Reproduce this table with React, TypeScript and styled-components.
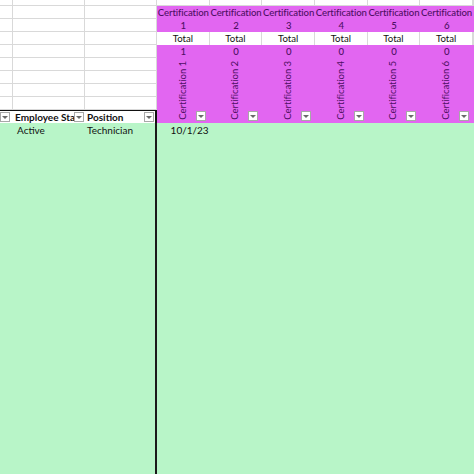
import React from "react";
import styled, { createGlobalStyle, css } from "styled-components";

const MAGENTA = "#E266F1";
const PURPLE = "#4E0F63";
const GREEN = "#B8F5C8";
const GRID = "#D9D9D9";

const Global = createGlobalStyle`
  html, body { margin: 0; padding: 0; background: #fff; }
  body { font-family: Lato, "Liberation Sans", sans-serif; }
`;

const Sheet = styled.div`
  width: 474px;
  height: 474px;
  overflow: hidden;
  display: grid;
  grid-template-columns: 13px 72px 72px repeat(6, 52.67px) 1fr;
  grid-template-rows: 6px repeat(8, 13px) 13px 13px 1fr;
  font-size: 10px;
`;

type Area = { c: string; r: string };

const Cell = styled.div<{ $c: string; $r: string }>`
  grid-column: ${(p) => p.$c};
  grid-row: ${(p) => p.$r};
  box-sizing: border-box;
  position: relative;
  min-width: 0;
  overflow: hidden;
`;

const GridCell = styled(Cell)`
  background: #fff;
  border-right: 1px solid ${GRID};
  border-bottom: 1px solid ${GRID};
`;

const MagentaCell = styled(Cell)`
  background: ${MAGENTA};
  color: ${PURPLE};
  display: flex;
  align-items: center;
  justify-content: center;
  font-size: 9.6px;
  letter-spacing: -0.1px;
  line-height: 13px;
  white-space: nowrap;
  font-weight: 500;
`;

const TotalCell = styled(Cell)`
  background: #fff;
  color: #111;
  border-right: 1px solid ${GRID};
  display: flex;
  align-items: center;
  justify-content: center;
  font-size: 9.6px;
`;

const RotatedHeader = styled(Cell)`
  background: ${MAGENTA};
  display: flex;
  align-items: flex-end;
  justify-content: center;
  padding-bottom: 3px;
  padding-right: 1px;
`;

const VerticalText = styled.span`
  writing-mode: vertical-rl;
  transform: rotate(180deg);
  color: ${PURPLE};
  font-size: 9.6px;
  letter-spacing: -0.1px;
  line-height: 12px;
  white-space: nowrap;
`;

const HeaderCell = styled(Cell)<{ $last?: boolean }>`
  background: #fff;
  border-top: 1px solid #111;
  display: flex;
  align-items: center;
  padding-left: 2px;
  font-weight: 700;
  color: #111;
  font-size: 10px;
  white-space: nowrap;
  ${(p) =>
    p.$last &&
    css`
      border-right: 2px solid #111;
    `}
`;

const HeaderText = styled.span`
  flex: 1;
  min-width: 0;
  overflow: hidden;
`;

const GreenCell = styled(Cell)<{ $edge?: boolean; $align?: string; $pad?: number }>`
  background: ${GREEN};
  color: #111;
  font-size: 10px;
  display: flex;
  align-items: center;
  justify-content: ${(p) => p.$align || "flex-start"};
  padding-left: ${(p) => p.$pad ?? 0}px;
  white-space: nowrap;
  ${(p) =>
    p.$edge &&
    css`
      border-right: 2px solid #1a1a1a;
    `}
`;

const DateCell = styled(GreenCell)`
  padding-right: 1px;
  font-size: 10px;
`;

const Drop = styled.span<{ $abs?: boolean }>`
  flex: none;
  width: 10px;
  height: 10px;
  box-sizing: border-box;
  background: #fff;
  border: 1px solid #a8a8a8;
  display: flex;
  align-items: center;
  justify-content: center;
  margin-right: 1px;
  ${(p) =>
    p.$abs &&
    css`
      position: absolute;
      right: 3px;
      bottom: 2px;
    `}
  &::after {
    content: "";
    width: 0;
    height: 0;
    border-left: 3px solid transparent;
    border-right: 3px solid transparent;
    border-top: 3px solid #6a6a6a;
  }
`;

const certs = [
  { n: 1, total: 1 },
  { n: 2, total: 0 },
  { n: 3, total: 0 },
  { n: 4, total: 0 },
  { n: 5, total: 0 },
  { n: 6, total: 0 },
];

export default function App() {
  const leftGrid: Area[] = [];
  for (let r = 1; r <= 9; r++) {
    for (let c = 1; c <= 3; c++) leftGrid.push({ c: `${c}`, r: `${r}` });
  }
  const topRight: Area[] = [];
  for (let c = 4; c <= 10; c++) topRight.push({ c: `${c}`, r: "1" });

  return (
    <>
      <Global />
      <Sheet>
        {leftGrid.map((a) => (
          <GridCell key={`l${a.c}-${a.r}`} $c={a.c} $r={a.r} />
        ))}
        {topRight.map((a) => (
          <GridCell key={`t${a.c}`} $c={a.c} $r={a.r} />
        ))}

        {certs.map((ct, i) => {
          const col = `${i + 4}`;
          return (
            <React.Fragment key={ct.n}>
              <MagentaCell $c={col} $r="2">Certification</MagentaCell>
              <MagentaCell $c={col} $r="3">{ct.n}</MagentaCell>
              <TotalCell $c={col} $r="4">Total</TotalCell>
              <MagentaCell $c={col} $r="5">{ct.total}</MagentaCell>
              <RotatedHeader $c={col} $r="6 / 11">
                <VerticalText>Certification {ct.n}</VerticalText>
                <Drop $abs />
              </RotatedHeader>
            </React.Fragment>
          );
        })}
        <MagentaCell $c="10" $r="2" />
        <MagentaCell $c="10" $r="3" />
        <TotalCell $c="10" $r="4" />
        <MagentaCell $c="10" $r="5" />
        <RotatedHeader $c="10" $r="6 / 11" />

        <HeaderCell $c="1" $r="10" style={{ paddingLeft: 0 }}>
          <Drop />
        </HeaderCell>
        <HeaderCell $c="2" $r="10">
          <HeaderText>Employee Status</HeaderText>
          <Drop />
        </HeaderCell>
        <HeaderCell $c="3" $r="10" $last>
          <HeaderText>Position</HeaderText>
          <Drop />
        </HeaderCell>

        <GreenCell $c="1" $r="11" />
        <GreenCell $c="2" $r="11" $pad={4}>Active</GreenCell>
        <GreenCell $c="3" $r="11" $pad={2} $edge>Technician</GreenCell>
        <DateCell $c="4" $r="11" $align="flex-end">10/1/23</DateCell>
        <GreenCell $c="5 / 11" $r="11" />

        <GreenCell $c="1 / 4" $r="12" $edge />
        <GreenCell $c="4 / 11" $r="12" />
      </Sheet>
    </>
  );
}
